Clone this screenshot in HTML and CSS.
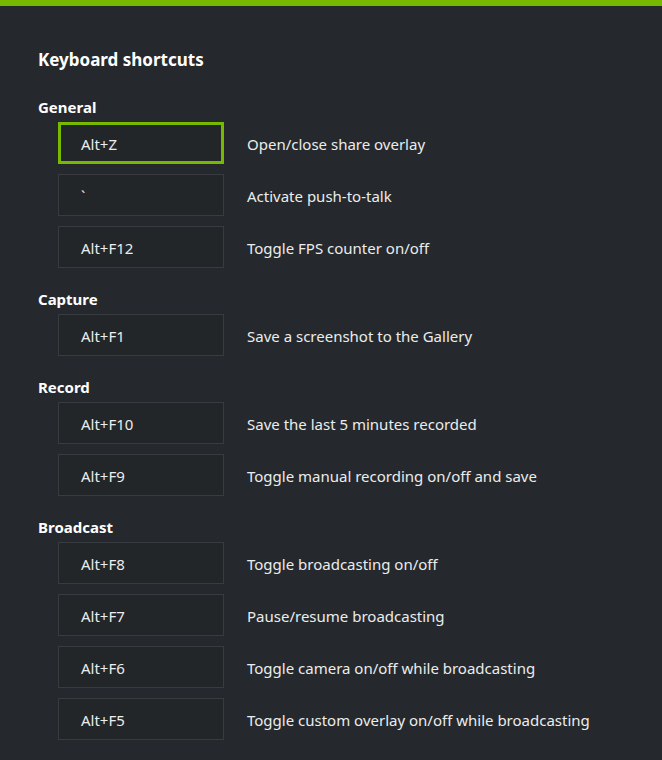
FILE: index.html
```html
<!DOCTYPE html>
<html lang="en">
<head>
<meta charset="utf-8">
<title>Keyboard shortcuts</title>
<link rel="stylesheet" href="styles.css">
</head>
<body>
<div class="topbar"></div>
<main class="panel">
  <h1 class="title">Keyboard shortcuts</h1>

  <section class="group">
    <h2 class="group-title">General</h2>
    <div class="row"><div class="key key-active">Alt+Z</div><div class="desc">Open/close share overlay</div></div>
    <div class="row"><div class="key">`</div><div class="desc">Activate push-to-talk</div></div>
    <div class="row"><div class="key">Alt+F12</div><div class="desc">Toggle FPS counter on/off</div></div>
  </section>

  <section class="group">
    <h2 class="group-title">Capture</h2>
    <div class="row"><div class="key">Alt+F1</div><div class="desc">Save a screenshot to the Gallery</div></div>
  </section>

  <section class="group">
    <h2 class="group-title">Record</h2>
    <div class="row"><div class="key">Alt+F10</div><div class="desc">Save the last 5 minutes recorded</div></div>
    <div class="row"><div class="key">Alt+F9</div><div class="desc">Toggle manual recording on/off and save</div></div>
  </section>

  <section class="group">
    <h2 class="group-title">Broadcast</h2>
    <div class="row"><div class="key">Alt+F8</div><div class="desc">Toggle broadcasting on/off</div></div>
    <div class="row"><div class="key">Alt+F7</div><div class="desc">Pause/resume broadcasting</div></div>
    <div class="row"><div class="key">Alt+F6</div><div class="desc">Toggle camera on/off while broadcasting</div></div>
    <div class="row"><div class="key">Alt+F5</div><div class="desc">Toggle custom overlay on/off while broadcasting</div></div>
  </section>
</main>
</body>
</html>
```

FILE: styles.css
```css
html, body {
  margin: 0;
  padding: 0;
  background: #25292d;
}
body {
  font-family: "Noto Sans", "Open Sans", sans-serif;
  color: #eeeeee;
  height: 760px;
  overflow: hidden;
}
.topbar {
  height: 6px;
  background: #76b900;
}
.panel {
  padding: 42px 0 0 38px;
}
.title {
  margin: 0;
  font-size: 17px;
  line-height: 24px;
  font-weight: 700;
  color: #ffffff;
}
.group {
  display: flex;
  flex-direction: column;
  gap: 10px;
  margin-top: 21px;
}
.group:first-of-type {
  margin-top: 25px;
}
.group-title {
  margin: 0 0 -5px 0;
  font-size: 15px;
  line-height: 20px;
  font-weight: 700;
  color: #ffffff;
}
.row {
  display: flex;
  align-items: center;
  gap: 23px;
  padding-left: 20px;
}
.key {
  box-sizing: border-box;
  width: 166px;
  height: 42px;
  border: 1px solid #383c40;
  background: #232629;
  padding: 2px 0 0 22px;
  display: flex;
  align-items: center;
  font-size: 15px;
  color: #ececec;
}
.key-active {
  border: 3px solid #76b900;
  padding-left: 20px;
}
.desc {
  padding-top: 2px;
  font-size: 15px;
  color: #ececec;
}
```
